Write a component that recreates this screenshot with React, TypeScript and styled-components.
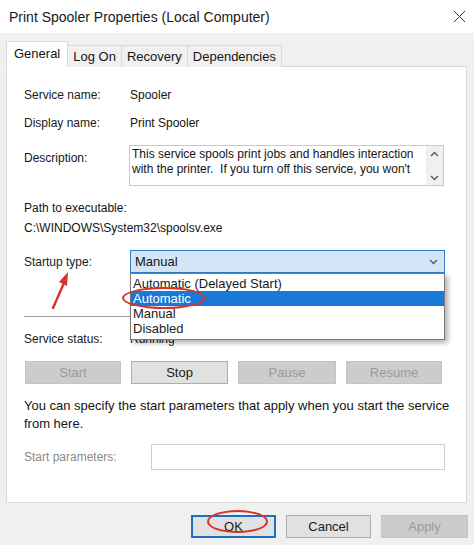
import styled, { createGlobalStyle } from "styled-components"

const GlobalStyle = createGlobalStyle`
  html, body {
    margin: 0;
    background: #f0f0f0;
    font-family: "Liberation Sans", Arial, sans-serif;
    font-size: 12px;
    color: #141414;
  }
`

const Window = styled.div`
  width: 474px;
  height: 545px;
  display: flex;
  flex-direction: column;
  overflow: hidden;
  background: #f0f0f0;
`

const TitleBar = styled.div`
  height: 33px;
  flex-shrink: 0;
  background: #ffffff;
  display: flex;
  align-items: center;
  justify-content: space-between;
  padding: 0 8px 0 9px;
  font-size: 14px;
  color: #1a1a1a;
`

const Body = styled.div`
  padding: 8px 0 0 6px;
`

const TabStrip = styled.div`
  display: flex;
  align-items: flex-end;
  height: 26px;
  margin-bottom: -1px;
  position: relative;
  z-index: 1;
`

const Tab = styled.div<{ $active?: boolean }>`
  height: ${(p) => (p.$active ? "26px" : "22px")};
  box-sizing: border-box;
  padding: 0 ${(p) => (p.$active ? "7px" : "5px")};
  display: flex;
  align-items: center;
  font-size: 13px;
  background: ${(p) => (p.$active ? "#ffffff" : "#f0f0f0")};
  border: 1px solid #d9d9d9;
  border-bottom: ${(p) => (p.$active ? "1px solid #ffffff" : "none")};
  margin-left: ${(p) => (p.$active ? "0" : "-1px")};
  padding-bottom: ${(p) => (p.$active ? "2px" : "0")};
`

const Panel = styled.div`
  position: relative;
  width: 461px;
  height: 437px;
  box-sizing: border-box;
  background: #ffffff;
  border: 1px solid #d9d9d9;
  padding: 19px 0 0 17px;
  display: flex;
  flex-direction: column;
`

const InfoRow = styled.div<{ $top?: number }>`
  display: grid;
  grid-template-columns: 106px 1fr;
  align-items: center;
  min-height: 18px;
  margin-top: ${(p) => p.$top ?? 0}px;
`

const Label = styled.div<{ $muted?: boolean }>`
  color: ${(p) => (p.$muted ? "#8a8a8a" : "#1a1a1a")};
`

const DescRow = styled.div`
  display: grid;
  grid-template-columns: 105px 315px;
  margin-top: 13px;
`

const DescLabel = styled.div`
  padding-top: 6px;
`

const DescBox = styled.div`
  height: 41px;
  box-sizing: border-box;
  border: 1px solid #c8c8c8;
  display: flex;
  background: #fff;
`

const DescText = styled.div`
  flex: 1;
  padding: 1px 0 0 2px;
  line-height: 15px;
  white-space: nowrap;
  overflow: hidden;
`

const ScrollBar = styled.div`
  width: 17px;
  background: #f0f0f0;
  display: flex;
  flex-direction: column;
  justify-content: space-between;
  align-items: center;
  padding: 5px 0 4px;
`

const PathBlock = styled.div`
  margin-top: 12px;
  line-height: 20px;
`

const StartupRow = styled.div`
  display: grid;
  grid-template-columns: 106px 315px;
  align-items: center;
  margin-top: 12px;
`

const ComboWrap = styled.div`
  position: relative;
`

const Combo = styled.div`
  height: 23px;
  box-sizing: border-box;
  background: #d3e6f7;
  border: 1px solid #2f7fc8;
  display: flex;
  align-items: center;
  justify-content: space-between;
  padding: 0 6px 0 4px;
  font-size: 13px;
`

const DropList = styled.div`
  position: absolute;
  left: 0;
  top: 23px;
  width: 315px;
  box-sizing: border-box;
  background: #ffffff;
  border: 1px solid #7a7a7a;
  padding: 2px 0 3px;
  box-shadow: 3px 3px 5px rgba(0, 0, 0, 0.3);
  z-index: 5;
`

const DropItem = styled.div<{ $selected?: boolean }>`
  height: 15px;
  line-height: 15px;
  padding-left: 2px;
  font-size: 13px;
  background: ${(p) => (p.$selected ? "#1a78d6" : "transparent")};
  color: ${(p) => (p.$selected ? "#ffffff" : "#1a1a1a")};
`

const RedEllipse = styled.div<{ $l: number; $t: number; $w: number; $h: number }>`
  position: absolute;
  left: ${(p) => p.$l}px;
  top: ${(p) => p.$t}px;
  width: ${(p) => p.$w}px;
  height: ${(p) => p.$h}px;
  box-sizing: border-box;
  border: 2.5px solid #d8322c;
  border-radius: 50%;
  pointer-events: none;
  z-index: 6;
`

const Arrow = styled.svg`
  position: absolute;
  left: 38px;
  top: 203px;
  z-index: 6;
`

const Separator = styled.div`
  height: 1px;
  width: 421px;
  background: #a0a0a0;
  margin-top: 43px;
`

const ServiceButtons = styled.div`
  display: grid;
  grid-template-columns: 96px 97px 98px 96px;
  column-gap: 10px;
  margin: 13px 0 0 1px;
`

const WinButton = styled.div<{ $disabled?: boolean; $default?: boolean }>`
  height: 23px;
  box-sizing: border-box;
  display: flex;
  align-items: center;
  justify-content: center;
  position: relative;
  font-size: 13px;
  background: ${(p) => (p.$disabled ? "#cccccc" : "#e1e1e1")};
  color: ${(p) => (p.$disabled ? "#9a9a9a" : "#1a1a1a")};
  border: ${(p) =>
    p.$default ? "2px solid #1e6fc0" : p.$disabled ? "1px solid #c4c4c4" : "1px solid #adadad"};
`

const HelpText = styled.div`
  margin-top: 13px;
  line-height: 18px;
  font-size: 13px;
`

const ParamRow = styled.div`
  display: grid;
  grid-template-columns: 127px 294px;
  align-items: center;
  margin-top: 11px;
`

const ParamInput = styled.div`
  height: 26px;
  box-sizing: border-box;
  border: 1px solid #cfcfcf;
  background: #ffffff;
`

const Footer = styled.div`
  display: grid;
  grid-template-columns: 85px 85px 87px;
  column-gap: 10px;
  justify-content: end;
  margin: 12px 6px 0 0;
`

const Chevron = ({ up }: { up?: boolean }) => (
  <svg width="9" height="6" viewBox="0 0 9 6">
    <path
      d={up ? "M1 5 L4.5 1.5 L8 5" : "M1 1 L4.5 4.5 L8 1"}
      fill="none"
      stroke="#555"
      strokeWidth="1.3"
    />
  </svg>
)

export default function App() {
  return (
    <Window>
      <GlobalStyle />
      <TitleBar>
        <span>Print Spooler Properties (Local Computer)</span>
        <svg width="13" height="13" viewBox="0 0 13 13">
          <path d="M1 1 L12 12 M12 1 L1 12" stroke="#333" strokeWidth="1" />
        </svg>
      </TitleBar>
      <Body>
        <TabStrip>
          <Tab $active>General</Tab>
          <Tab>Log On</Tab>
          <Tab>Recovery</Tab>
          <Tab>Dependencies</Tab>
        </TabStrip>
        <Panel>
          <InfoRow>
            <Label>Service name:</Label>
            <div>Spooler</div>
          </InfoRow>
          <InfoRow $top={10}>
            <Label>Display name:</Label>
            <div>Print Spooler</div>
          </InfoRow>
          <DescRow>
            <DescLabel>Description:</DescLabel>
            <DescBox>
              <DescText>
                This service spools print jobs and handles interaction
                <br />
                with the printer.&nbsp; If you turn off this service, you won't
              </DescText>
              <ScrollBar>
                <Chevron up />
                <Chevron />
              </ScrollBar>
            </DescBox>
          </DescRow>
          <PathBlock>
            <div>Path to executable:</div>
            <div>C:\WINDOWS\System32\spoolsv.exe</div>
          </PathBlock>
          <StartupRow>
            <Label>Startup type:</Label>
            <ComboWrap>
              <Combo>
                <span>Manual</span>
                <Chevron />
              </Combo>
              <DropList>
                <DropItem>Automatic (Delayed Start)</DropItem>
                <DropItem $selected>Automatic</DropItem>
                <DropItem>Manual</DropItem>
                <DropItem>Disabled</DropItem>
              </DropList>
              <RedEllipse $l={-8} $t={37} $w={84} $h={22} />
            </ComboWrap>
          </StartupRow>
          <Arrow width="30" height="42" viewBox="0 0 30 42">
            <path d="M8 38 L19 13" stroke="#d8322c" strokeWidth="2.4" strokeLinecap="round" />
            <path d="M23 2 L14 12 L22 16 Z" fill="#d8322c" />
          </Arrow>
          <Separator />
          <InfoRow $top={13}>
            <Label>Service status:</Label>
            <div>Running</div>
          </InfoRow>
          <ServiceButtons>
            <WinButton $disabled>Start</WinButton>
            <WinButton>Stop</WinButton>
            <WinButton $disabled>Pause</WinButton>
            <WinButton $disabled>Resume</WinButton>
          </ServiceButtons>
          <HelpText>
            You can specify the start parameters that apply when you start the service
            <br />
            from here.
          </HelpText>
          <ParamRow>
            <Label $muted>Start parameters:</Label>
            <ParamInput />
          </ParamRow>
        </Panel>
        <Footer>
          <WinButton $default>
            OK
            <RedEllipse $l={14} $t={-7} $w={61} $h={23} />
          </WinButton>
          <WinButton>Cancel</WinButton>
          <WinButton $disabled>Apply</WinButton>
        </Footer>
      </Body>
    </Window>
  )
}
